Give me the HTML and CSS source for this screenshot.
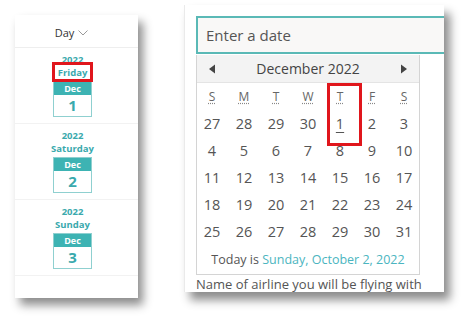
FILE: index.html
```html
<!DOCTYPE html>
<html>
<head>
<meta charset="utf-8">
<link rel="stylesheet" href="styles.css">
</head>
<body>
<div class="stage">
  <div class="left-card">
    <div class="day-head">Day <svg class="chev" width="10" height="6" viewBox="0 0 10 6"><path d="M0.5 0.5 L5 5 L9.5 0.5" fill="none" stroke="#999" stroke-width="1"/></svg></div>
    <div class="day-row">
      <div class="yr">2022</div>
      <div class="wd">Friday</div>
      <div class="cal-ico"><div class="mon">Dec</div><div class="num">1</div></div>
      <div class="hl hl-friday"></div>
    </div>
    <div class="day-row">
      <div class="yr">2022</div>
      <div class="wd">Saturday</div>
      <div class="cal-ico"><div class="mon">Dec</div><div class="num">2</div></div>
    </div>
    <div class="day-row">
      <div class="yr">2022</div>
      <div class="wd">Sunday</div>
      <div class="cal-ico"><div class="mon">Dec</div><div class="num">3</div></div>
    </div>
  </div>

  <div class="right-card">
    <div class="date-input">Enter a date</div>
    <div class="picker">
      <div class="picker-head">
        <svg width="8" height="10" viewBox="0 0 8 10"><path d="M7 0.5 L1 5 L7 9.5 Z" fill="#444"/></svg>
        <span class="month">December 2022</span>
        <svg width="8" height="10" viewBox="0 0 8 10"><path d="M1 0.5 L7 5 L1 9.5 Z" fill="#444"/></svg>
      </div>
      <div class="grid">
        <abbr>S</abbr><abbr>M</abbr><abbr>T</abbr><abbr>W</abbr><abbr>T</abbr><abbr>F</abbr><abbr>S</abbr>
        <span>27</span><span>28</span><span>29</span><span>30</span><span class="sel">1</span><span>2</span><span>3</span>
        <span>4</span><span>5</span><span>6</span><span>7</span><span>8</span><span>9</span><span>10</span>
        <span>11</span><span>12</span><span>13</span><span>14</span><span>15</span><span>16</span><span>17</span>
        <span>18</span><span>19</span><span>20</span><span>21</span><span>22</span><span>23</span><span>24</span>
        <span>25</span><span>26</span><span>27</span><span>28</span><span>29</span><span>30</span><span>31</span>
      </div>
      <div class="today">Today is <span class="link">Sunday, October 2, 2022</span></div>
      <div class="hl hl-thu"></div>
    </div>
    <div class="field-label">Name of airline you will be flying with</div>
  </div>
</div>
</body>
</html>
```

FILE: styles.css
```css
html, body {
  margin: 0;
  padding: 0;
  background: #ffffff;
  width: 474px;
  height: 329px;
  overflow: hidden;
  font-family: "Open Sans", "Noto Sans", sans-serif;
}

.stage {
  display: flex;
  align-items: flex-start;
}

/* ---------- left card ---------- */
.left-card {
  margin: 15px 0 0 15px;
  width: 123px;
  height: 283px;
  background: #fff;
  box-shadow: 5px 7px 9px rgba(0,0,0,0.45);
  display: flex;
  flex-direction: column;
  align-items: stretch;
}

.day-head {
  height: 33px;
  padding-top: 2px;
  box-sizing: border-box;
  border-bottom: 1px solid #eeeeee;
  display: flex;
  align-items: center;
  justify-content: center;
  gap: 4px;
  padding-right: 10px;
  font-size: 11px;
  color: #333;
}

.chev { margin-top: 1px; }

.day-row {
  position: relative;
  height: 75px;
  border-bottom: 1px solid #f2f2f2;
  display: flex;
  flex-direction: column;
  align-items: center;
  padding-right: 8px;
  color: #3aa9ad;
  font-weight: 700;
  font-size: 9.5px;
  line-height: 13px;
}

.yr { margin-top: 5px; }

.cal-ico {
  margin-top: 2px;
  width: 37px;
  border: 1px solid #8fd0d0;
  display: flex;
  flex-direction: column;
}

.mon {
  height: 13px;
  background: #3db3b3;
  color: #fff;
  font-size: 9px;
  line-height: 13px;
  text-align: center;
}

.num {
  height: 21px;
  font-size: 15px;
  line-height: 21px;
  text-align: center;
  color: #3aa9ad;
}

.hl {
  position: absolute;
  border: 3px solid #e0161c;
  box-sizing: border-box;
}

.hl-friday {
  left: 37px;
  top: 14px;
  width: 41px;
  height: 20px;
}

/* ---------- right card ---------- */
.right-card {
  margin: 5px 0 0 46px;
  width: 260px;
  height: 287px;
  background: #fff;
  box-shadow: 6px 8px 9px rgba(0,0,0,0.45);
  border-left: 1px solid #eaeaea;
  box-sizing: border-box;
  padding: 11px 0 0 11px;
  overflow: hidden;
  display: flex;
  flex-direction: column;
}

.date-input {
  width: 248px;
  height: 38px;
  box-sizing: border-box;
  border: 2px solid #5ab9b6;
  border-right: none;
  background: #f9f8f7;
  font-size: 15px;
  color: #555;
  line-height: 34px;
  padding-left: 8px;
}

.picker {
  position: relative;
  margin-top: 1px;
  width: 224px;
  box-sizing: border-box;
  border: 1px solid #d4d4d4;
  border-top: none;
  background: #fff;
}

.picker-head {
  height: 28px;
  background: #f3f3f3;
  border-bottom: 1px solid #e4e4e4;
  display: flex;
  align-items: center;
  justify-content: space-between;
  padding: 0 11px 0 11px;
  box-sizing: border-box;
}

.month {
  font-size: 14px;
  color: #444;
}

.grid {
  display: grid;
  grid-template-columns: repeat(7, 32px);
  grid-auto-rows: 27px;
  margin-left: -1px;
}

.grid > * {
  display: flex;
  align-items: center;
  justify-content: center;
  font-size: 14.5px;
  color: #555;
}

.grid abbr {
  font-size: 12px;
  color: #666;
  text-decoration: underline dotted #888;
  text-underline-offset: 2px;
}

.grid .sel {
  text-decoration: underline;
  text-underline-offset: 3px;
}

.today {
  height: 29px;
  line-height: 29px;
  text-align: center;
  font-size: 12.5px;
  color: #555;
}

.today .link { color: #4bb5c0; }

.hl-thu {
  left: 130px;
  top: 28px;
  width: 35px;
  height: 63px;
}

.field-label {
  margin-top: 1px;
  font-size: 13px;
  color: #555;
  line-height: 17px;
  white-space: nowrap;
}
```
